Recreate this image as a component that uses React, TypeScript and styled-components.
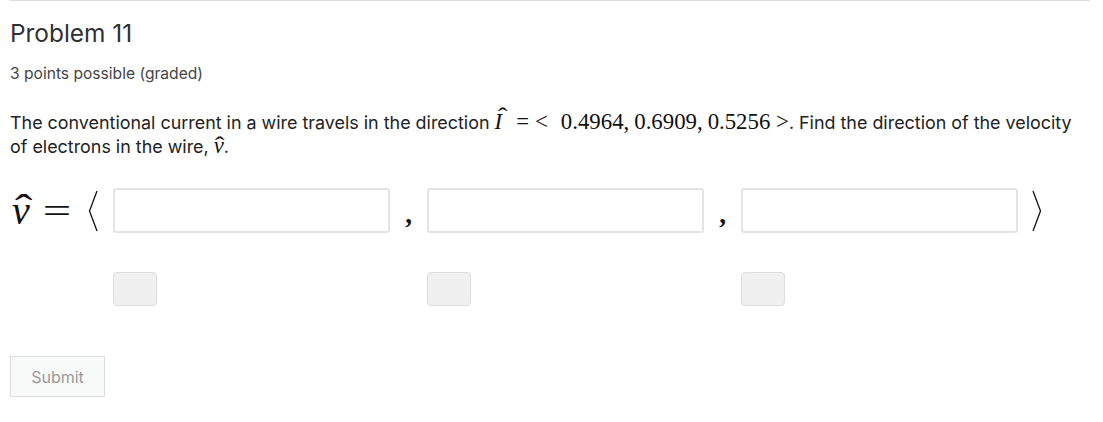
import React from 'react';
import styled, { createGlobalStyle } from 'styled-components';

const GlobalStyle = createGlobalStyle`
  html, body {
    margin: 0;
    padding: 0;
    background: #fff;
  }
  body {
    font-family: Inter, "Noto Sans", "Liberation Sans", sans-serif;
    color: #313131;
  }
`;

const Page = styled.div`
  margin-left: 10px;
  width: 1080px;
  border-top: 1px solid #dddddd;
`;

const Title = styled.h3`
  margin: 0;
  padding-top: 18px;
  font-size: 24.4px;
  font-weight: 400;
  line-height: 28px;
  color: #313131;
`;

const Points = styled.div`
  margin-top: 17px;
  font-size: 15.6px;
  line-height: 20px;
  color: #454545;
`;

const Prompt = styled.p`
  margin: 27px 0 0;
  font-size: 17.9px;
  line-height: 24px;
  color: #222;
`;

const Math = styled.span`
  font-family: "Liberation Serif", "DejaVu Serif", serif;
  font-size: 22.8px;
  line-height: 1;
  color: #111;
`;

const HatVar = styled.i<{ hatLeft: number; hatTop: number }>`
  position: relative;
  display: inline-block;
  font-family: "Liberation Serif", "DejaVu Serif", serif;
  font-style: italic;
  line-height: 1;

  &::after {
    content: "ˆ";
    position: absolute;
    left: ${p => p.hatLeft}em;
    top: ${p => p.hatTop}em;
    line-height: 1;
    font-style: normal;
    transform: scaleX(1.3);
  }
`;

const Rel = styled.span<{ gap: number }>`
  margin-right: ${p => p.gap}px;
`;

const Sep = styled.span`
  margin-right: 5px;
`;

const AnswerRow = styled.div`
  display: flex;
  align-items: center;
  margin-top: 29px;
  height: 45px;
`;

const Lhs = styled.div`
  display: flex;
  align-items: center;
  width: 103px;
  padding-left: 2px;
  box-sizing: border-box;
  font-family: "Liberation Serif", "DejaVu Serif", serif;
  font-size: 40px;
  color: #111;
`;

const Equals = styled.span`
  display: inline-block;
  width: 28px;
  margin: 0 17px 0 13px;
  text-align: center;
  font-size: 36px;
  line-height: 1;
  transform: scaleX(1.4);
`;

const Field = styled.input`
  box-sizing: border-box;
  width: 277px;
  height: 45px;
  border: 2px solid #e4e4e4;
  border-radius: 3px;
  background: #fff;
  padding: 0 8px;
  font-size: 16px;
  outline: none;
`;

const Comma = styled.span`
  width: 37px;
  text-align: center;
  font-family: "Liberation Serif", serif;
  font-weight: 700;
  font-size: 27px;
  color: #111;
  padding-top: 8px;
`;

const Closing = styled.span`
  display: block;
  margin-left: 14px;
`;

const StatusRow = styled.div`
  display: flex;
  margin-top: 39px;
  padding-left: 103px;
`;

const StatusCell = styled.div`
  width: 314px;
`;

const StatusBox = styled.div`
  box-sizing: border-box;
  width: 44px;
  height: 34px;
  background: #f0f0f0;
  border: 1px solid #dedede;
  border-radius: 4px;
`;

const SubmitButton = styled.button`
  display: block;
  margin-top: 50px;
  box-sizing: border-box;
  width: 95px;
  height: 41px;
  border: 1px solid #dddddd;
  background: #f8f9f9;
  color: #9b9b9b;
  font-family: inherit;
  font-size: 16px;
  border-radius: 0;
`;

const Angle: React.FC<{ dir: 'left' | 'right' }> = ({ dir }) => (
  <svg width="10" height="42" viewBox="0 0 10 42" style={{ display: 'block' }}>
    <polyline
      points={dir === 'left' ? '9,1 1.5,21 9,41' : '1,1 8.5,21 1,41'}
      fill="none"
      stroke="#111"
      strokeWidth="1.3"
    />
  </svg>
);

export default function App() {
  return (
    <>
      <GlobalStyle />
      <Page>
        <Title>Problem 11</Title>
        <Points>3 points possible (graded)</Points>
        <Prompt>
          The conventional current in a wire travels in the direction{' '}
          <Math>
            <HatVar hatLeft={0.2} hatTop={-0.22}>I</HatVar>
            <Rel gap={14} />
            <Rel gap={6}>=</Rel>
            <Rel gap={13}>&lt;</Rel>
            0.4964,<Sep />0.6909,<Sep />0.5256 &gt;
          </Math>
          . Find the direction of the velocity of electrons in the wire,{' '}
          <Math>
            <HatVar hatLeft={0.12} hatTop={0}>v</HatVar>
          </Math>
          .
        </Prompt>
        <AnswerRow>
          <Lhs>
            <HatVar hatLeft={0.12} hatTop={-0.05}>v</HatVar>
            <Equals>=</Equals>
            <Angle dir="left" />
          </Lhs>
          <Field />
          <Comma>,</Comma>
          <Field />
          <Comma>,</Comma>
          <Field />
          <Closing>
            <Angle dir="right" />
          </Closing>
        </AnswerRow>
        <StatusRow>
          <StatusCell>
            <StatusBox />
          </StatusCell>
          <StatusCell>
            <StatusBox />
          </StatusCell>
          <StatusCell>
            <StatusBox />
          </StatusCell>
        </StatusRow>
        <SubmitButton>Submit</SubmitButton>
      </Page>
    </>
  );
}
